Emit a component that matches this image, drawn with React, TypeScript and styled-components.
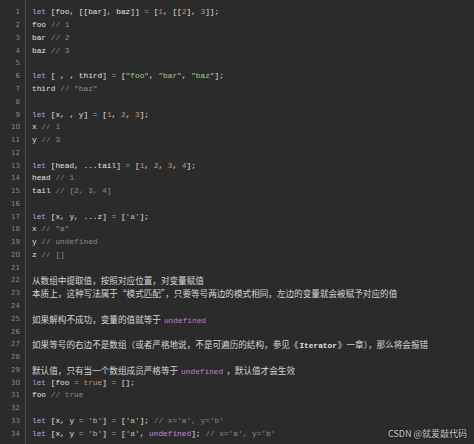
import React from "react";
import styled, { createGlobalStyle } from "styled-components";

const Global = createGlobalStyle`
  html, body { margin: 0; padding: 0; background: #2b2b2b; }
  body { width: 474px; height: 444px; overflow: hidden; }
`;

const LH = 12.77;

const Editor = styled.div`
  position: relative;
  width: 474px;
  height: 444px;
  background: #2b2b2b;
  display: flex;
  flex-direction: column;
  padding-top: 6px;
  box-sizing: border-box;
`;

const GutterLine = styled.div`
  position: absolute;
  left: 25px;
  top: 0;
  bottom: 0;
  width: 1px;
  background: #4a4a4a;
`;

const Row = styled.div`
  display: flex;
  height: ${LH}px;
  align-items: center;
`;

const LineNo = styled.span`
  width: 20px;
  text-align: right;
  flex: none;
  font-family: "DejaVu Sans", "Liberation Sans", sans-serif;
  font-size: 7px;
  color: #8a8a8a;
`;

const Content = styled.span`
  padding-left: 12px;
  white-space: pre;
  font-family: "Liberation Mono", monospace;
  font-size: 7.8px;
  color: #e2e2e2;
`;

const Prose = styled.span`
  padding-left: 12px;
  white-space: pre;
  font-family: "Noto Sans CJK SC", sans-serif;
  font-size: 8.6px;
  color: #d6d6d6;
`;

type Kind = "k" | "n" | "s" | "o" | "c" | "p" | "u";

const colors: Record<Kind, string> = {
  k: "#c29ee6",
  n: "#dc8f5a",
  s: "#a6c994",
  o: "#72c08c",
  c: "#8c8c8c",
  p: "#e2e2e2",
  u: "#c48ae0",
};

const Tok = styled.span<{ $k: Kind }>`
  color: ${(p) => colors[p.$k]};
`;

const InlineCode = styled.span<{ $plain?: boolean }>`
  font-family: "Liberation Mono", monospace;
  font-size: 7.8px;
  margin: 0 ${(p) => (p.$plain ? 1 : 3)}px;
  color: ${(p) => (p.$plain ? "#e0e0e0" : "#c77ad8")};
  font-weight: ${(p) => (p.$plain ? 700 : 400)};
`;

const Watermark = styled.div`
  position: absolute;
  right: 7px;
  bottom: 4px;
  font-family: "Noto Sans CJK SC", "Liberation Sans", sans-serif;
  font-size: 9px;
  color: #d0d0d0;
  text-shadow: 0 0 2px #000;
`;

type T = [Kind, string];
type Part = string | { code: string; plain?: boolean };
type Line =
  | { type: "code"; toks: T[] }
  | { type: "prose"; parts: Part[] }
  | { type: "empty" };

const c = (...toks: T[]): Line => ({ type: "code", toks });
const pr = (...parts: Part[]): Line => ({ type: "prose", parts });
const e: Line = { type: "empty" };

const lines: Line[] = [
  c(["k", "let"], ["p", " [foo, [[bar], baz]] "], ["o", "="], ["p", " ["], ["n", "1"], ["p", ", [["], ["n", "2"], ["p", "], "], ["n", "3"], ["p", "]];"]),
  c(["p", "foo "], ["c", "// 1"]),
  c(["p", "bar "], ["c", "// 2"]),
  c(["p", "baz "], ["c", "// 3"]),
  e,
  c(["k", "let"], ["p", " [ , , third] "], ["o", "="], ["p", " ["], ["s", "\"foo\""], ["p", ", "], ["s", "\"bar\""], ["p", ", "], ["s", "\"baz\""], ["p", "];"]),
  c(["p", "third "], ["c", "// \"baz\""]),
  e,
  c(["k", "let"], ["p", " [x, , y] "], ["o", "="], ["p", " ["], ["n", "1"], ["p", ", "], ["n", "2"], ["p", ", "], ["n", "3"], ["p", "];"]),
  c(["p", "x "], ["c", "// 1"]),
  c(["p", "y "], ["c", "// 3"]),
  e,
  c(["k", "let"], ["p", " [head, ...tail] "], ["o", "="], ["p", " ["], ["n", "1"], ["p", ", "], ["n", "2"], ["p", ", "], ["n", "3"], ["p", ", "], ["n", "4"], ["p", "];"]),
  c(["p", "head "], ["c", "// 1"]),
  c(["p", "tail "], ["c", "// [2, 3, 4]"]),
  e,
  c(["k", "let"], ["p", " [x, y, ...z] "], ["o", "="], ["p", " ["], ["s", "'a'"], ["p", "];"]),
  c(["p", "x "], ["c", "// \"a\""]),
  c(["p", "y "], ["c", "// undefined"]),
  c(["p", "z "], ["c", "// []"]),
  e,
  pr("从数组中提取值，按照对应位置，对变量赋值"),
  pr("本质上，这种写法属于“模式匹配”，只要等号两边的模式相同，左边的变量就会被赋予对应的值"),
  e,
  pr("如果解构不成功，变量的值就等于", { code: "undefined" }),
  e,
  pr("如果等号的右边不是数组（或者严格地说，不是可遍历的结构，参见《", { code: "Iterator", plain: true }, "》一章），那么将会报错"),
  e,
  pr("默认值，只有当一个数组成员严格等于", { code: "undefined" }, "，默认值才会生效"),
  c(["k", "let"], ["p", " [foo "], ["o", "="], ["p", " "], ["n", "true"], ["p", "] "], ["o", "="], ["p", " [];"]),
  c(["p", "foo "], ["c", "// true"]),
  e,
  c(["k", "let"], ["p", " [x, y "], ["o", "="], ["p", " "], ["s", "'b'"], ["p", "] "], ["o", "="], ["p", " ["], ["s", "'a'"], ["p", "]; "], ["c", "// x='a', y='b'"]),
  c(["k", "let"], ["p", " [x, y "], ["o", "="], ["p", " "], ["s", "'b'"], ["p", "] "], ["o", "="], ["p", " ["], ["s", "'a'"], ["p", ", "], ["u", "undefined"], ["p", "]; "], ["c", "// x='a', y='b'"]),
];

export default function App() {
  return (
    <>
      <Global />
      <Editor>
        <GutterLine />
        {lines.map((l, i) => (
          <Row key={i}>
            <LineNo>{i + 1}</LineNo>
            {l.type === "code" && (
              <Content>
                {l.toks.map(([k, t], j) => (
                  <Tok key={j} $k={k}>{t}</Tok>
                ))}
              </Content>
            )}
            {l.type === "prose" && (
              <Prose>
                {l.parts.map((p, j) =>
                  typeof p === "string" ? (
                    <React.Fragment key={j}>{p}</React.Fragment>
                  ) : (
                    <InlineCode key={j} $plain={p.plain}>{p.code}</InlineCode>
                  )
                )}
              </Prose>
            )}
            {l.type === "empty" && <Content> </Content>}
          </Row>
        ))}
        <Watermark>CSDN @就爱敲代码</Watermark>
      </Editor>
    </>
  );
}
